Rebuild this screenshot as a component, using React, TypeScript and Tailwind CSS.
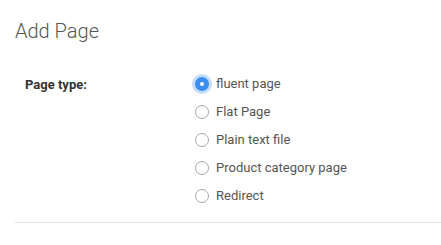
const options = ['fluent page', 'Flat Page', 'Plain text file', 'Product category page', 'Redirect'];

function Radio({ checked }: { checked: boolean }) {
  if (checked) {
    return (
      <span className="flex h-[14px] w-[14px] items-center justify-center rounded-full bg-[#3b8ff0] shadow-[0_0_0_3px_rgba(59,143,240,0.3)]">
        <span className="h-[4px] w-[4px] rounded-full bg-white" />
      </span>
    );
  }
  return <span className="h-[14px] w-[14px] rounded-full border border-[#a8a8a8] bg-white" />;
}

export default function App() {
  return (
    <div className="h-[245px] w-[441px] bg-white font-['Roboto',sans-serif]">
      <h1 className="pl-[15px] pt-[18px] text-[20px] font-light leading-[26px] text-[#555]">Add Page</h1>

      <div className="mt-[30px] flex pl-[25px]">
        <div className="w-[170px] pt-[1px] text-[13px] font-bold leading-[20px] text-[#333]">Page type:</div>
        <div className="flex flex-col gap-[8px]">
          {options.map((o, i) => (
            <label key={o} className="flex h-[20px] items-center gap-[7px]">
              <Radio checked={i === 0} />
              <span className="text-[13px] leading-[20px] text-[#555]">{o}</span>
            </label>
          ))}
        </div>
      </div>

      <div className="ml-[15px] mt-[16px] h-px bg-[#e5e5e5]" />
    </div>
  );
}
